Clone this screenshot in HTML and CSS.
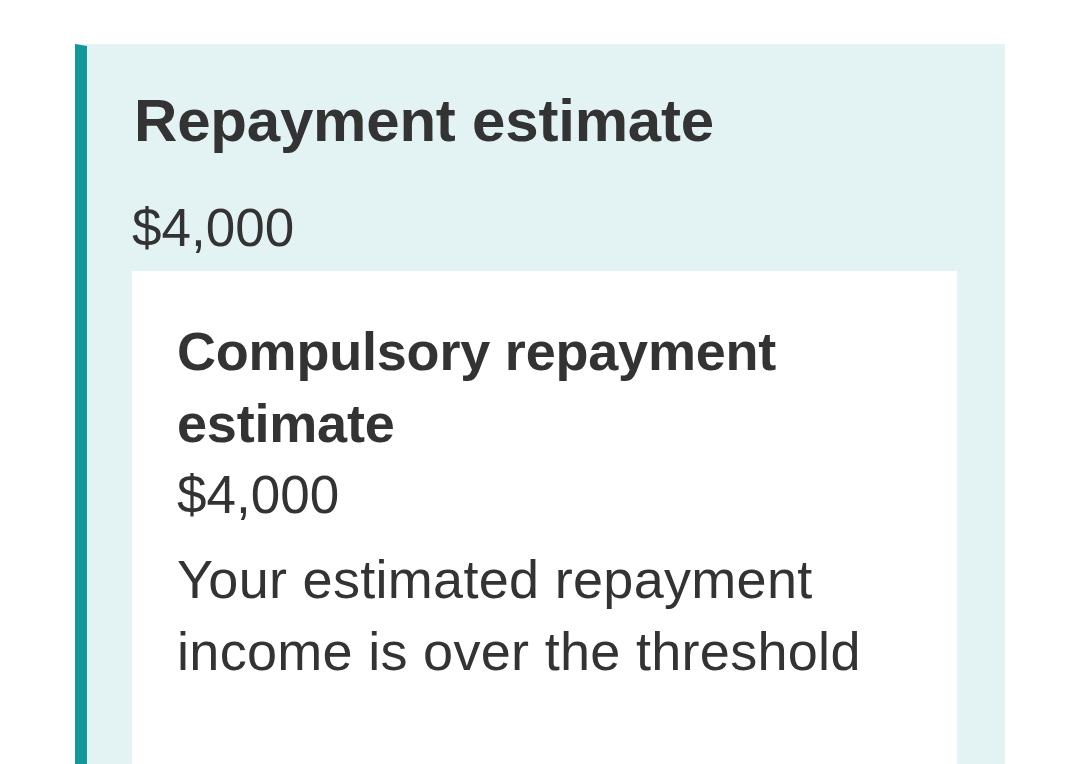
FILE: index.html
```html
<!DOCTYPE html>
<html lang="en">
<head>
<meta charset="utf-8">
<title>Repayment estimate</title>
<link rel="stylesheet" href="styles.css">
</head>
<body>
<section class="panel">
  <h2 class="panel-title">Repayment estimate</h2>
  <p class="panel-amount">$4,000</p>
  <div class="card">
    <h3 class="card-title">Compulsory repayment estimate</h3>
    <p class="card-amount">$4,000</p>
    <p class="card-note">Your estimated repayment income is over the threshold</p>
  </div>
</section>
</body>
</html>
```
FILE: styles.css
```css
html, body {
  margin: 0;
  padding: 0;
  background: #ffffff;
}
body {
  font-family: "Liberation Sans", Arial, Helvetica, sans-serif;
  color: #333333;
}
.panel {
  margin: 44px 75px 0 75px;
  background: #e3f3f4;
  border-left: 12px solid #13989a;
  border-top: 2px solid #e3f3f4;
  padding: 39px 48px 0 45px;
  height: 720px;
  box-sizing: border-box;
  display: flex;
  flex-direction: column;
}
.panel-title {
  margin: 0;
  font-size: 60px;
  font-weight: 700;
  line-height: 72px;
  letter-spacing: -0.2px;
  padding-left: 2px;
}
.panel-amount {
  margin: 35px 0 7px 0;
  font-size: 53px;
  line-height: 72px;
}
.card {
  flex: 1;
  background: #ffffff;
  padding: 44px 45px 0 45px;
}
.card-title {
  margin: 0;
  font-size: 54px;
  font-weight: 700;
  line-height: 72px;
  letter-spacing: -0.2px;
}
.card-amount {
  margin: 0;
  font-size: 53px;
  line-height: 72px;
}
.card-note {
  margin: 12px 0 0 0;
  font-size: 54px;
  line-height: 72px;
  letter-spacing: 0.3px;
}
```
